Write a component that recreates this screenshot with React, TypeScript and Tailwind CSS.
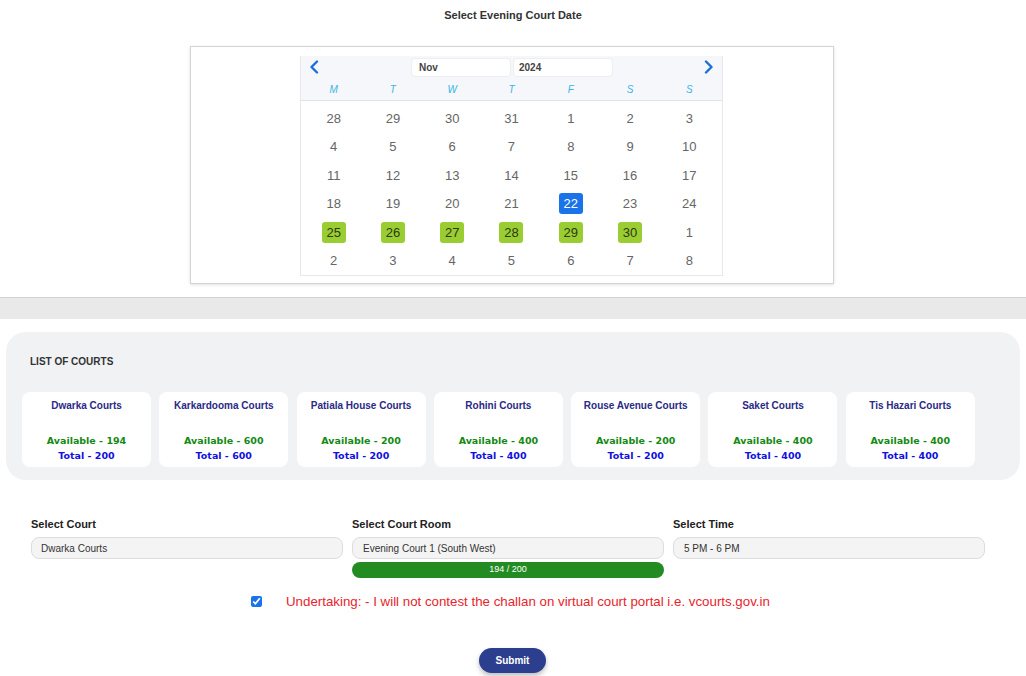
import React from "react";

const weeks: number[][] = [
  [28, 29, 30, 31, 1, 2, 3],
  [4, 5, 6, 7, 8, 9, 10],
  [11, 12, 13, 14, 15, 16, 17],
  [18, 19, 20, 21, 22, 23, 24],
  [25, 26, 27, 28, 29, 30, 1],
  [2, 3, 4, 5, 6, 7, 8],
];

const courts = [
  { name: "Dwarka Courts", available: 194, total: 200 },
  { name: "Karkardooma Courts", available: 600, total: 600 },
  { name: "Patiala House Courts", available: 200, total: 200 },
  { name: "Rohini Courts", available: 400, total: 400 },
  { name: "Rouse Avenue Courts", available: 200, total: 200 },
  { name: "Saket Courts", available: 400, total: 400 },
  { name: "Tis Hazari Courts", available: 400, total: 400 },
];

function Chevron({ dir }: { dir: "left" | "right" }) {
  return (
    <svg width="10" height="14" viewBox="0 0 10 14" fill="none">
      <path
        d={dir === "left" ? "M8 1.5 L2.5 7 L8 12.5" : "M2 1.5 L7.5 7 L2 12.5"}
        stroke="#1a6fd9"
        strokeWidth="2.4"
        strokeLinecap="round"
        strokeLinejoin="round"
      />
    </svg>
  );
}

function DayCell({ day, row, col }: { day: number; row: number; col: number }) {
  const isToday = row === 3 && col === 4;
  const isOpen = row === 4 && col < 6;
  let cls = "text-[#666]";
  if (isToday) cls = "bg-[#1a73e8] text-white rounded-[3px]";
  if (isOpen) cls = "bg-[#9acd32] text-[#2d3a12] rounded-[3px]";
  return (
    <div className="flex h-[28.4px] items-center justify-center">
      <span className={`flex h-[21px] w-[24px] items-center justify-center text-[13px] ${cls}`}>{day}</span>
    </div>
  );
}

export default function App() {
  return (
    <div className="min-h-[676px] w-[1026px] bg-white font-['Liberation_Sans',Arial,sans-serif] text-[#333]">
      {/* Date picker */}
      <div className="pt-[7px] text-center text-[11px] font-bold text-[#333]">Select Evening Court Date</div>

      <div className="ml-[190px] mt-[22px] h-[238px] w-[644px] border border-[#d4d4d4] bg-white pt-[9px] shadow-[0_1px_3px_rgba(0,0,0,0.12)]">
        <div className="ml-[109px] w-[423px] border border-t-0 border-[#e6e8eb]">
          <div className="flex h-[23px] items-center bg-[#f5f7fa] px-[8px]">
            <Chevron dir="left" />
            <div className="ml-[92px] flex gap-[2px]">
              <div className="flex h-[19px] w-[100px] items-center rounded-[4px] border border-[#eceef1] bg-white pl-[7px] text-[10px] font-bold text-[#444]">
                Nov
              </div>
              <div className="flex h-[19px] w-[100px] items-center rounded-[4px] border border-[#eceef1] bg-white pl-[5px] text-[10px] font-bold text-[#444]">
                2024
              </div>
            </div>
            <div className="ml-auto">
              <Chevron dir="right" />
            </div>
          </div>
          <div className="grid h-[22px] grid-cols-7 items-center border-b border-[#dfe2e6] bg-[#f5f7fa] px-[3px]">
            {["M", "T", "W", "T", "F", "S", "S"].map((d, i) => (
              <div key={i} className="text-center text-[10px] italic text-[#3ab4e6]">
                {d}
              </div>
            ))}
          </div>
          <div className="px-[3px] pt-[4px]">
            {weeks.map((w, r) => (
              <div key={r} className="grid grid-cols-7">
                {w.map((d, c) => (
                  <DayCell key={c} day={d} row={r} col={c} />
                ))}
              </div>
            ))}
          </div>
        </div>
      </div>

      {/* Divider band */}
      <div className="mt-[13px] h-[22px] border-t border-[#d2d2d2] bg-[#e9e9e9]" />

      {/* Courts list */}
      <div className="mx-[6px] mt-[13px] h-[148px] rounded-[20px] bg-[#f1f2f4] pl-[16px] pt-[22px]">
        <div className="pl-[8px] text-[10px] font-bold text-[#333]">LIST OF COURTS</div>
        <div className="mt-[23px] flex gap-[8.3px]">
          {courts.map((c) => (
            <div key={c.name} className="flex h-[75px] w-[129px] flex-col items-center rounded-[8px] bg-white pt-[6px]">
              <div className="text-[10px] font-bold text-[#2a2a86]">{c.name}</div>
              <div className="mt-[21px] font-['DejaVu_Sans',sans-serif] text-[9.5px] font-bold text-[#138a13]">
                Available - {c.available}
              </div>
              <div className="mt-[1px] font-['DejaVu_Sans',sans-serif] text-[9.5px] font-bold text-[#1010e0]">
                Total - {c.total}
              </div>
            </div>
          ))}
        </div>
      </div>

      {/* Form */}
      <div className="ml-[31px] mt-[36px] grid w-[954px] grid-cols-3 gap-x-[9px]">
        <div>
          <div className="text-[11px] font-bold text-[#222]">Select Court</div>
          <div className="mt-[5px] flex h-[22px] items-center rounded-[8px] border border-[#dcdcdc] bg-[#f4f4f4] pl-[9px] text-[10px] text-[#333]">
            Dwarka Courts
          </div>
        </div>
        <div>
          <div className="text-[11px] font-bold text-[#222]">Select Court Room</div>
          <div className="mt-[5px] flex h-[22px] items-center rounded-[8px] border border-[#dcdcdc] bg-[#f4f4f4] pl-[10px] text-[10px] text-[#333]">
            Evening Court 1 (South West)
          </div>
          <div className="mt-[3px] flex h-[16px] items-center justify-center rounded-full bg-[#228b22] text-[9px] text-white">
            194 / 200
          </div>
        </div>
        <div>
          <div className="text-[11px] font-bold text-[#222]">Select Time</div>
          <div className="mt-[5px] flex h-[22px] items-center rounded-[8px] border border-[#dcdcdc] bg-[#f4f4f4] pl-[10px] text-[10px] text-[#333]">
            5 PM - 6 PM
          </div>
        </div>
      </div>

      <div className="mt-[14px] flex items-center pl-[251px]">
        <input type="checkbox" defaultChecked className="h-[11px] w-[11px] accent-[#1a73e8]" />
        <span className="ml-[24px] text-[13.3px] text-[#e8242b]">
          Undertaking: - I will not contest the challan on virtual court portal i.e. vcourts.gov.in
        </span>
      </div>

      <div className="mt-[36px] flex justify-center">
        <button className="ml-[-1px] h-[25px] w-[67px] rounded-full bg-[#2c3f8f] text-[10px] font-bold text-white shadow-[0_3px_5px_rgba(0,0,0,0.25)]">
          Submit
        </button>
      </div>
    </div>
  );
}
